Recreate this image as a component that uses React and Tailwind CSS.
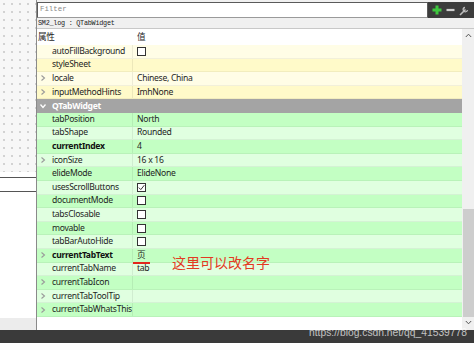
import React from 'react';

const rows = [
  { name: 'autoFillBackground', value: 'box', tone: 'y1' },
  { name: 'styleSheet', value: '', tone: 'y2' },
  { name: 'locale', value: 'Chinese, China', tone: 'y1', arrow: true },
  { name: 'inputMethodHints', value: 'ImhNone', tone: 'y2', arrow: true },
  { section: 'QTabWidget' },
  { name: 'tabPosition', value: 'North', tone: 'g2' },
  { name: 'tabShape', value: 'Rounded', tone: 'g1' },
  { name: 'currentIndex', value: '4', tone: 'g2', bold: true },
  { name: 'iconSize', value: '16 x 16', tone: 'g1', arrow: true },
  { name: 'elideMode', value: 'ElideNone', tone: 'g2' },
  { name: 'usesScrollButtons', value: 'checked', tone: 'g1' },
  { name: 'documentMode', value: 'box', tone: 'g2' },
  { name: 'tabsClosable', value: 'box', tone: 'g1' },
  { name: 'movable', value: 'box', tone: 'g2' },
  { name: 'tabBarAutoHide', value: 'box', tone: 'g1' },
  { name: 'currentTabText', value: '页', tone: 'g2', arrow: true, bold: true },
  { name: 'currentTabName', value: 'tab', tone: 'g1' },
  { name: 'currentTabIcon', value: '', tone: 'g2', arrow: true },
  { name: 'currentTabToolTip', value: '', tone: 'g1', arrow: true },
  { name: 'currentTabWhatsThis', value: '', tone: 'g2', arrow: true },
];

const tones = {
  y1: 'bg-[#fffde6]',
  y2: 'bg-[#fffac9]',
  g1: 'bg-[#e0ffe0]',
  g2: 'bg-[#c3ffc3]',
};

const Arrow = ({ down, color = '#9a9a9a' }) => (
  <svg width="6" height="6" viewBox="0 0 6 6">
    {down ? (
      <path d="M0.5 1.5 L3 4.5 L5.5 1.5" fill="none" stroke={color} strokeWidth="1.3" />
    ) : (
      <path d="M1.5 0.5 L4.5 3 L1.5 5.5" fill="none" stroke={color} strokeWidth="1.1" />
    )}
  </svg>
);

const CheckBox = ({ checked }) => (
  <div className="w-[9px] h-[9px] border border-[#333] bg-white flex items-center justify-center">
    {checked && (
      <svg width="7" height="7" viewBox="0 0 7 7">
        <path d="M0.8 3.6 L2.8 5.6 L6.3 1.2" fill="none" stroke="#333" strokeWidth="1" />
      </svg>
    )}
  </div>
);

const Value = ({ value }) => {
  if (value === 'box') return <CheckBox />;
  if (value === 'checked') return <CheckBox checked />;
  return <span>{value}</span>;
};

const PropRow = ({ row }) => {
  if (row.section) {
    return (
      <div className="h-[13.6px] flex items-center bg-[#a4a4a4] text-white font-bold">
        <div className="w-[15px] shrink-0 pl-[3px] flex items-center">
          <Arrow down color="#ffffff" />
        </div>
        <span>{row.section}</span>
      </div>
    );
  }
  return (
    <div className={`h-[13.6px] flex items-center border-b border-black/[0.05] ${tones[row.tone]}`}>
      <div className="w-[96px] shrink-0 h-full flex items-center border-r border-black/[0.07] overflow-hidden">
        <div className="w-[15px] shrink-0 pl-[3px] flex items-center">{row.arrow && <Arrow />}</div>
        <span className={`whitespace-nowrap ${row.bold ? 'font-bold text-[#111]' : ''}`}>{row.name}</span>
      </div>
      <div className="flex-1 pl-[4px] flex items-center">
        <Value value={row.value} />
      </div>
    </div>
  );
};

const ToolIcons = () => (
  <div className="w-[46px] bg-[#3c3c3c] flex items-center gap-[4px] pl-[4px]">
    <svg width="10" height="10" viewBox="0 0 10 10">
      <path d="M5 0.5 V9.5 M0.5 5 H9.5" stroke="#3fc83f" strokeWidth="3" />
    </svg>
    <svg width="9" height="10" viewBox="0 0 9 10">
      <path d="M0.5 5 H8.5" stroke="#cfcfcf" strokeWidth="2.2" />
    </svg>
    <svg width="10" height="11" viewBox="0 0 10 11">
      <path d="M1 10 L6.5 4.5" stroke="#bdbdbd" strokeWidth="1.6" />
      <path d="M6 2.5 A2.2 2.2 0 1 0 8.5 5" fill="none" stroke="#bdbdbd" strokeWidth="1.3" />
    </svg>
  </div>
);

export default function App() {
  return (
    <div className="w-[474px] h-[343px] overflow-hidden flex flex-col bg-white font-['Noto_Sans','Noto_Sans_CJK_SC',sans-serif] text-[8.6px] tracking-[-0.3px] text-[#1e1e1e] relative">
      <div className="flex flex-1 min-h-0">
        {/* form editor side */}
        <div className="w-[37px] flex flex-col border-r border-[#8a8a8a]">
          <div className="h-[172px] bg-[#f7f7f7] bg-[radial-gradient(#d0d0d0_0.7px,transparent_0.8px)] bg-[size:8px_8px]"></div>
          <div className="h-[5px] bg-white"></div>
          <div className="h-[15px] bg-white border-t border-b border-[#555]"></div>
          <div className="flex-1 bg-white"></div>
          <div className="h-[12px] bg-[#ececec]"></div>
        </div>

        {/* property editor */}
        <div className="flex-1 flex flex-col min-w-0">
          <div className="h-[2px] bg-[#f0f0f0]"></div>
          <div className="h-[16px] flex">
            <div className="flex-1 border border-[#5a5a5a] border-b-[#9a9a9a] bg-white flex items-center pl-[2px] font-['Liberation_Mono',monospace] text-[7.4px] tracking-normal text-[#888]">
              Filter
            </div>
            <ToolIcons />
          </div>
          <div className="h-[11px] bg-[#f0f0f0] border-b border-[#c8c8c8] flex items-center pl-[1px] font-['Liberation_Mono',monospace] text-[6.8px] tracking-[-0.25px] text-[#222]">
            SM2_log : QTabWidget
          </div>
          <div className="flex-1 flex min-h-0">
            <div className="flex-1 flex flex-col bg-white">
              <div className="h-[16px] flex items-center">
                <div className="w-[96px] shrink-0 pl-[1px]">属性</div>
                <div className="pl-[4px]">值</div>
              </div>
              {rows.map((row, i) => (
                <PropRow key={i} row={row} />
              ))}
              <div className="flex-1 bg-white"></div>
            </div>
            <div className="w-[12px] bg-[#f0f0f0] flex flex-col items-center">
              <div className="h-[12px] flex items-center">
                <svg width="7" height="5" viewBox="0 0 7 5">
                  <path d="M0.8 4 L3.5 1.2 L6.2 4" fill="none" stroke="#555" strokeWidth="1" />
                </svg>
              </div>
              <div className="h-[168px]"></div>
              <div className="w-[11px] h-[108px] bg-[#cdcdcd]"></div>
              <div className="h-[10px] flex items-center">
                <svg width="7" height="5" viewBox="0 0 7 5">
                  <path d="M0.8 1 L3.5 3.8 L6.2 1" fill="none" stroke="#555" strokeWidth="1" />
                </svg>
              </div>
            </div>
          </div>
        </div>
      </div>

      {/* bottom dark strip */}
      <div className="h-[13px] bg-[#3a3a3a]"></div>

      {/* annotation over content */}
      <div className="absolute left-[133px] top-[262px] w-[17px] h-[1.6px] bg-[#e2261c]"></div>
      <div className="absolute left-[172px] top-[253px] text-[14px] leading-[18px] tracking-normal text-[#e33a22] font-['Noto_Sans_CJK_SC',sans-serif]">
        这里可以改名字
      </div>
      <div className="absolute left-[309px] top-[326px] text-[10.3px] leading-[13px] tracking-normal text-white/70 font-['Liberation_Sans',sans-serif]">
        https://blog.csdn.net/qq_41539778
      </div>
    </div>
  );
}
